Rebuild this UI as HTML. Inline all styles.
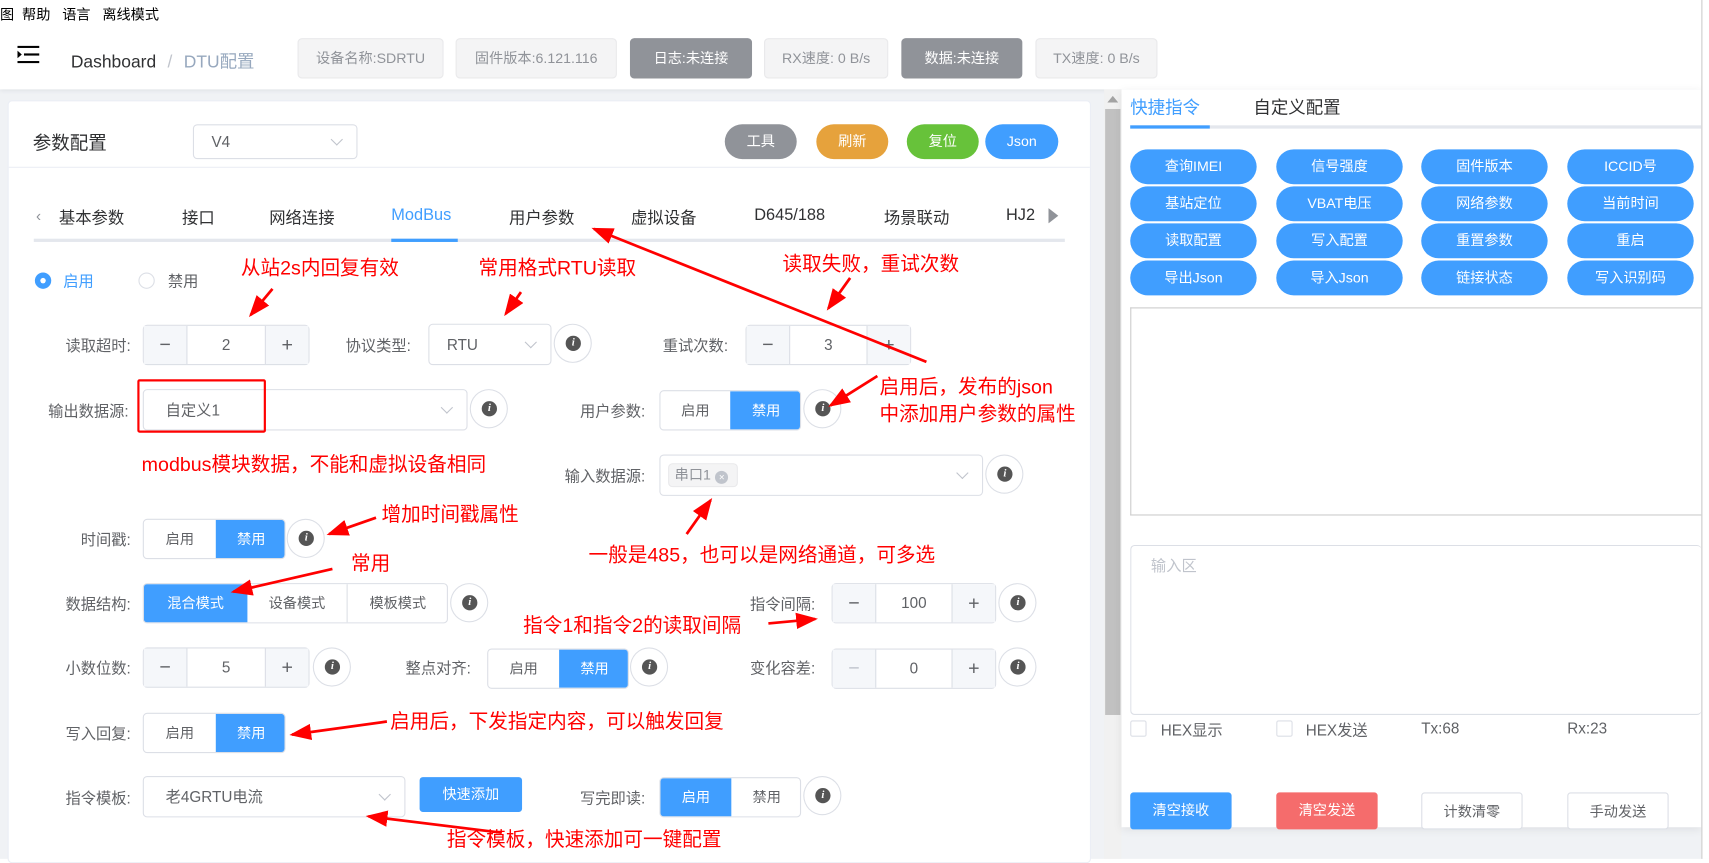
<!DOCTYPE html>
<html><head><meta charset="utf-8">
<style>
*{box-sizing:border-box;margin:0;padding:0}
html,body{width:1709px;height:858px;overflow:hidden;background:#fff;font-family:"Liberation Sans","Noto Sans CJK SC",sans-serif}
#w{position:absolute;left:0;top:0;width:1568px;height:788px;transform:scale(1.0899);transform-origin:0 0;background:#f0f2f5}
.a{position:absolute}
.t{position:absolute;white-space:nowrap}
.box{position:absolute;border:1px solid #dcdfe6;border-radius:4px;background:#fff}
.lbl{position:absolute;font-size:14px;color:#606266;white-space:nowrap;text-align:right}
.info{position:absolute;width:35px;height:36px;border:1px solid #dcdfe6;border-radius:50%;background:#fff}
.info:after{content:"i";position:absolute;left:10px;top:10px;width:14px;height:14px;border-radius:50%;background:#555;color:#fff;font:italic bold 10px/14px "Liberation Serif",serif;text-align:center}
.num{position:absolute;height:37px;border:1px solid #dcdfe6;border-radius:4px;background:#fff;font-size:14px;color:#606266}
.num .m,.num .p{position:absolute;top:0;width:40px;height:35px;background:#f5f7fa;text-align:center;line-height:34px;font-size:18px;color:#606266}
.num .m{left:0;border-right:1px solid #dcdfe6}
.num .p{right:0;border-left:1px solid #dcdfe6}
.num .v{position:absolute;left:40px;right:40px;top:0;line-height:35px;text-align:center}
.tg{position:absolute;height:37px;border:1px solid #dcdfe6;border-radius:4px;background:#fff;overflow:hidden;font-size:13px;color:#606266}
.tg span{position:absolute;top:0;height:35px;line-height:35px;text-align:center}
.tg .on{background:#409eff;color:#fff}
.sel{position:absolute;height:38px;border:1px solid #dcdfe6;border-radius:4px;background:#fff;font-size:14px;color:#606266}
.sel .v{position:absolute;left:16px;top:0;line-height:36px}
.sel .ar{position:absolute;right:14px;top:12px;width:8px;height:8px;border-right:1px solid #c0c4cc;border-bottom:1px solid #c0c4cc;transform:rotate(45deg)}
.red{position:absolute;white-space:nowrap;color:#f00;font-size:18px}
.qb{position:absolute;width:116px;height:32px;border-radius:16px;background:#409eff;color:#fff;font-size:13px;text-align:center;line-height:32px}
.hb{position:absolute;top:35px;height:37px;border:1px solid #e9e9eb;border-radius:4px;background:#f4f4f5;color:#909399;font-size:13px;text-align:center;line-height:35px}
.hb.d{background:#909399;border-color:#909399;color:#fff}
.rb{position:absolute;top:114px;height:32px;border-radius:16px;color:#fff;font-size:13px;text-align:center;line-height:32px;width:66px}
.tab{position:absolute;top:189px;font-size:15px;color:#303133;white-space:nowrap}
.bb{position:absolute;top:727px;width:93px;height:34px;border-radius:3px;font-size:13px;text-align:center;line-height:34px}
.cb{position:absolute;top:661px;width:15px;height:15px;border:1px solid #dcdfe6;border-radius:2px;background:#fff}
</style></head><body>
<div id="w">
<!-- top area white -->
<div class="a" style="left:0;top:0;width:1568px;height:82px;background:#fff;box-shadow:0 1px 4px rgba(0,21,41,.08)"></div>
<div class="t" style="left:0;top:3px;font-size:13px;color:#000">图&nbsp;&nbsp;帮助&nbsp;&nbsp;&nbsp;语言&nbsp;&nbsp;&nbsp;离线模式</div>
<svg class="a" style="left:16px;top:42px" width="22" height="16"><rect x="0" y="0" width="20" height="2" fill="#000"/><rect x="6" y="7" width="14" height="2" fill="#000"/><rect x="0" y="14" width="20" height="2" fill="#000"/><path d="M0 4.5 L4 8 L0 11.5Z" fill="#000"/></svg>
<div class="t" style="left:65px;top:43px;font-size:16px;color:#303133">Dashboard <span style="color:#c0c4cc;margin:0 6px">/</span> <span style="color:#97a8be">DTU配置</span></div>
<div class="hb" style="left:273px;width:134px">设备名称:SDRTU</div>
<div class="hb" style="left:418px;width:148px">固件版本:6.121.116</div>
<div class="hb d" style="left:578px;width:112px">日志:未连接</div>
<div class="hb" style="left:701px;width:114px">RX速度: 0 B/s</div>
<div class="hb d" style="left:827px;width:111px">数据:未连接</div>
<div class="hb" style="left:950px;width:112px">TX速度: 0 B/s</div>

<!-- left card -->
<div class="a" style="left:7px;top:92px;width:994px;height:700px;background:#fff;border:1px solid #ebeef5;border-radius:4px"></div>
<div class="t" style="left:30px;top:117px;font-size:17px;color:#303133">参数配置</div>
<div class="sel" style="left:177px;top:114px;width:151px;height:32px"><span class="v" style="line-height:30px">V4</span><span class="ar" style="top:9px"></span></div>
<div class="rb" style="left:665px;background:#909399">工具</div>
<div class="rb" style="left:749px;background:#e6a23c">刷新</div>
<div class="rb" style="left:832px;background:#67c23a">复位</div>
<div class="rb" style="left:904px;background:#409eff;width:67px">Json</div>
<div class="a" style="left:8px;top:153px;width:992px;height:1px;background:#ebeef5"></div>

<div class="t" style="left:33px;top:190px;font-size:14px;color:#909399">‹</div>
<div class="tab" style="left:54px">基本参数</div>
<div class="tab" style="left:167px">接口</div>
<div class="tab" style="left:247px">网络连接</div>
<div class="tab" style="left:359px;color:#409eff">ModBus</div>
<div class="tab" style="left:467px">用户参数</div>
<div class="tab" style="left:579px">虚拟设备</div>
<div class="tab" style="left:692px">D645/188</div>
<div class="tab" style="left:811px">场景联动</div>
<div class="tab" style="left:923px">HJ2</div>
<svg class="a" style="left:962px;top:191px" width="10" height="14"><path d="M0 0 L9 7 L0 14Z" fill="#909399"/></svg>
<div class="a" style="left:31px;top:219px;width:946px;height:3px;background:#e4e7ed"></div>
<div class="a" style="left:359px;top:219px;width:61px;height:3px;background:#409eff"></div>

<!-- radios -->
<div class="a" style="left:32px;top:250px;width:15px;height:15px;border-radius:50%;background:#409eff"></div>
<div class="a" style="left:37px;top:255px;width:5px;height:5px;border-radius:50%;background:#fff"></div>
<div class="t" style="left:58px;top:248px;font-size:14px;color:#409eff">启用</div>
<div class="a" style="left:127px;top:250px;width:15px;height:15px;border-radius:50%;border:1px solid #dcdfe6"></div>
<div class="t" style="left:154px;top:248px;font-size:14px;color:#606266">禁用</div>

<!-- row1 -->
<div class="lbl" style="left:30px;width:90px;top:307px">读取超时:</div>
<div class="num" style="left:131px;top:298px;width:153px"><span class="m">−</span><span class="v">2</span><span class="p">+</span></div>
<div class="lbl" style="left:300px;width:77px;top:307px">协议类型:</div>
<div class="sel" style="left:393px;top:297px;width:113px"><span class="v">RTU</span><span class="ar"></span></div>
<div class="info" style="left:508px;top:297px"></div>
<div class="lbl" style="left:590px;width:78px;top:307px">重试次数:</div>
<div class="num" style="left:684px;top:298px;width:152px"><span class="m">−</span><span class="v">3</span><span class="p">+</span></div>

<!-- row2 -->
<div class="lbl" style="left:20px;width:98px;top:367px">输出数据源:</div>
<div class="sel" style="left:131px;top:357px;width:298px"><span class="v" style="left:20px">自定义1</span><span class="ar"></span></div>
<div class="a" style="left:126px;top:348px;width:118px;height:49px;border:2px solid #f00;border-radius:2px"></div>
<div class="info" style="left:431px;top:357px"></div>
<div class="lbl" style="left:510px;width:82px;top:367px">用户参数:</div>
<div class="tg" style="left:605px;top:358px;width:130px"><span style="left:0;width:64px">启用</span><span class="on" style="left:64px;width:66px">禁用</span></div>
<div class="info" style="left:737px;top:357px"></div>

<div class="red" style="left:130px;top:412px">modbus模块数据，不能和虚拟设备相同</div>

<div class="lbl" style="left:495px;width:97px;top:427px">输入数据源:</div>
<div class="sel" style="left:605px;top:417px;width:297px;height:38px"><span class="ar"></span></div>
<div class="a" style="left:613px;top:425px;width:64px;height:22px;background:#f4f4f5;border:1px solid #e9e9eb;border-radius:4px;font-size:13px;color:#909399;line-height:20px;padding-left:5px">串口1<span style="display:inline-block;width:12px;height:12px;border-radius:50%;background:#c0c4cc;color:#fff;font-size:9px;line-height:12px;text-align:center;margin-left:4px;vertical-align:-1px">×</span></div>
<div class="info" style="left:904px;top:417px"></div>

<!-- 时间戳 -->
<div class="lbl" style="left:40px;width:80px;top:485px">时间戳:</div>
<div class="tg" style="left:131px;top:476px;width:131px"><span style="left:0;width:66px">启用</span><span class="on" style="left:66px;width:65px">禁用</span></div>
<div class="info" style="left:263px;top:476px"></div>

<!-- 数据结构 -->
<div class="lbl" style="left:30px;width:90px;top:544px">数据结构:</div>
<div class="tg" style="left:131px;top:535px;width:280px"><span class="on" style="left:0;width:95px">混合模式</span><span style="left:95px;width:92px;border-right:1px solid #dcdfe6">设备模式</span><span style="left:187px;width:92px">模板模式</span></div>
<div class="info" style="left:413px;top:535px"></div>
<div class="lbl" style="left:660px;width:88px;top:544px">指令间隔:</div>
<div class="num" style="left:763px;top:535px;width:151px"><span class="m">−</span><span class="v">100</span><span class="p">+</span></div>
<div class="info" style="left:916px;top:535px"></div>

<!-- 小数位数 -->
<div class="lbl" style="left:30px;width:90px;top:603px">小数位数:</div>
<div class="num" style="left:131px;top:594px;width:153px"><span class="m">−</span><span class="v">5</span><span class="p">+</span></div>
<div class="info" style="left:287px;top:594px"></div>
<div class="lbl" style="left:350px;width:82px;top:603px">整点对齐:</div>
<div class="tg" style="left:447px;top:595px;width:130px"><span style="left:0;width:65px">启用</span><span class="on" style="left:65px;width:65px">禁用</span></div>
<div class="info" style="left:578px;top:594px"></div>
<div class="lbl" style="left:660px;width:88px;top:603px">变化容差:</div>
<div class="num" style="left:763px;top:595px;width:151px"><span class="m" style="color:#c0c4cc">−</span><span class="v">0</span><span class="p">+</span></div>
<div class="info" style="left:916px;top:594px"></div>

<!-- 写入回复 -->
<div class="lbl" style="left:30px;width:90px;top:663px">写入回复:</div>
<div class="tg" style="left:131px;top:654px;width:131px"><span style="left:0;width:66px">启用</span><span class="on" style="left:66px;width:65px">禁用</span></div>

<!-- 指令模板 -->
<div class="lbl" style="left:30px;width:90px;top:722px">指令模板:</div>
<div class="sel" style="left:131px;top:712px;width:241px"><span class="v" style="left:20px">老4GRTU电流</span><span class="ar"></span></div>
<div class="a" style="left:385px;top:713px;width:94px;height:32px;background:#409eff;border-radius:3px;color:#fff;font-size:13px;text-align:center;line-height:32px">快速添加</div>
<div class="lbl" style="left:505px;width:87px;top:722px">写完即读:</div>
<div class="tg" style="left:605px;top:713px;width:130px"><span class="on" style="left:0;width:65px">启用</span><span style="left:65px;width:65px">禁用</span></div>
<div class="info" style="left:737px;top:712px"></div>

<!-- annotations -->
<div class="red" style="left:221px;top:232px">从站2s内回复有效</div>
<div class="red" style="left:439px;top:232px">常用格式RTU读取</div>
<div class="red" style="left:718px;top:228px">读取失败，重试次数</div>
<div class="red" style="left:807px;top:341px">启用后，发布的json</div>
<div class="red" style="left:807px;top:366px">中添加用户参数的属性</div>
<div class="red" style="left:350px;top:458px">增加时间戳属性</div>
<div class="red" style="left:540px;top:495px">一般是485，也可以是网络通道，可多选</div>
<div class="red" style="left:322px;top:503px">常用</div>
<div class="red" style="left:480px;top:560px">指令1和指令2的读取间隔</div>
<div class="red" style="left:358px;top:648px">启用后，下发指定内容，可以触发回复</div>
<div class="red" style="left:410px;top:756px">指令模板，快速添加可一键配置</div>
<svg class="a" style="left:0;top:0" width="1010" height="788">
<defs><marker id="h" markerWidth="8" markerHeight="6" refX="7" refY="3" orient="auto" markerUnits="strokeWidth"><path d="M0 0 L8 3 L0 6Z" fill="#f00"/></marker></defs>
<g stroke="#f00" stroke-width="2.5" fill="none" marker-end="url(#h)">
<line x1="250" y1="265" x2="230" y2="289"/>
<line x1="478" y1="268" x2="464" y2="288"/>
<line x1="780" y1="255" x2="760" y2="283"/>
<line x1="850" y1="332" x2="545" y2="210"/>
<line x1="805" y1="345" x2="762" y2="372"/>
<line x1="345" y1="475" x2="302" y2="490"/>
<line x1="305" y1="522" x2="214" y2="543"/>
<line x1="705" y1="572" x2="748" y2="568"/>
<line x1="355" y1="662" x2="268" y2="674"/>
<line x1="460" y1="764" x2="338" y2="749"/>
<line x1="630" y1="490" x2="652" y2="459"/>
</g></svg>

<!-- scrollbar -->
<div class="a" style="left:1013px;top:82px;width:16px;height:706px;background:#f1f1f1"></div>
<svg class="a" style="left:1016px;top:88px" width="10" height="6"><path d="M0 6 L5 0 L10 6Z" fill="#a3a3a3"/></svg>
<div class="a" style="left:1014px;top:100px;width:14px;height:556px;background:#c1c1c1"></div>

<!-- right panel -->
<div class="a" style="left:1029px;top:82px;width:532px;height:677px;background:#fff;box-shadow:0 2px 8px rgba(0,0,0,.08)"></div>
<div class="a" style="left:1561px;top:0;width:7px;height:788px;background:#fff;border-left:1px solid #ccc"></div>
<div class="t" style="left:1037px;top:85px;font-size:16px;color:#409eff">快捷指令</div>
<div class="t" style="left:1150px;top:85px;font-size:16px;color:#303133">自定义配置</div>
<div class="a" style="left:1037px;top:115px;width:524px;height:3px;background:#e4e7ed"></div>
<div class="a" style="left:1037px;top:115px;width:73px;height:3px;background:#409eff"></div>

<div class="qb" style="left:1037px;top:137px">查询IMEI</div>
<div class="qb" style="left:1171px;top:137px">信号强度</div>
<div class="qb" style="left:1304px;top:137px">固件版本</div>
<div class="qb" style="left:1438px;top:137px">ICCID号</div>
<div class="qb" style="left:1037px;top:171px">基站定位</div>
<div class="qb" style="left:1171px;top:171px">VBAT电压</div>
<div class="qb" style="left:1304px;top:171px">网络参数</div>
<div class="qb" style="left:1438px;top:171px">当前时间</div>
<div class="qb" style="left:1037px;top:205px">读取配置</div>
<div class="qb" style="left:1171px;top:205px">写入配置</div>
<div class="qb" style="left:1304px;top:205px">重置参数</div>
<div class="qb" style="left:1438px;top:205px">重启</div>
<div class="qb" style="left:1037px;top:239px">导出Json</div>
<div class="qb" style="left:1171px;top:239px">导入Json</div>
<div class="qb" style="left:1304px;top:239px">链接状态</div>
<div class="qb" style="left:1438px;top:239px">写入识别码</div>

<div class="a" style="left:1037px;top:282px;width:524px;height:191px;border:1px solid #ccc;border-right:none"></div>
<div class="a" style="left:1037px;top:500px;width:524px;height:156px;border:1px solid #dcdfe6;border-radius:4px;border-right:none"></div>
<div class="t" style="left:1056px;top:509px;font-size:14px;color:#c0c4cc">输入区</div>

<div class="cb" style="left:1037px"></div>
<div class="t" style="left:1065px;top:660px;font-size:14px;color:#606266">HEX显示</div>
<div class="cb" style="left:1171px"></div>
<div class="t" style="left:1198px;top:660px;font-size:14px;color:#606266">HEX发送</div>
<div class="t" style="left:1304px;top:660px;font-size:14px;color:#606266">Tx:68</div>
<div class="t" style="left:1438px;top:660px;font-size:14px;color:#606266">Rx:23</div>

<div class="bb" style="left:1037px;background:#409eff;color:#fff">清空接收</div>
<div class="bb" style="left:1171px;background:#f56c6c;color:#fff">清空发送</div>
<div class="bb" style="left:1304px;background:#fff;border:1px solid #dcdfe6;color:#606266">计数清零</div>
<div class="bb" style="left:1438px;background:#fff;border:1px solid #dcdfe6;color:#606266">手动发送</div>
</div>
</body></html>
